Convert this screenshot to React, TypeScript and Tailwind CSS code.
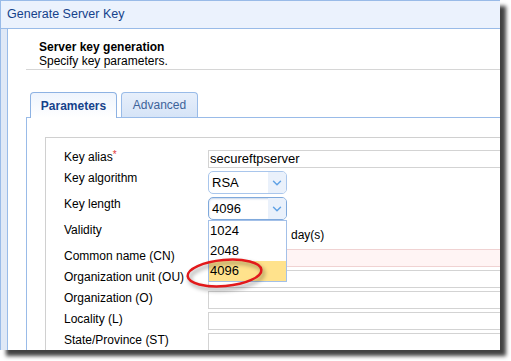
import { ChevronDown } from 'lucide-react';

interface Row {
  label: string;
  value?: string;
  kind: 'text' | 'select' | 'number';
  required?: boolean;
  invalid?: boolean;
}

const rows: Row[] = [
  { label: 'Key alias', value: 'secureftpserver', kind: 'text', required: true },
  { label: 'Key algorithm', value: 'RSA', kind: 'select' },
  { label: 'Key length', value: '4096', kind: 'select' },
  { label: 'Validity', kind: 'number' },
  { label: 'Common name (CN)', kind: 'text', invalid: true },
  { label: 'Organization unit (OU)', kind: 'text' },
  { label: 'Organization (O)', kind: 'text' },
  { label: 'Locality (L)', kind: 'text' },
  { label: 'State/Province (ST)', kind: 'text' },
];

function Select({ value, focused }: { value: string; focused?: boolean }) {
  return (
    <div
      className={`relative w-[79px] h-[23px] rounded-[5px] border bg-white flex items-center overflow-hidden ${
        focused ? 'border-[#7fa9dc] shadow-[inset_0_1px_2px_rgba(90,130,190,0.35)]' : 'border-[#a9c6ec]'
      }`}
    >
      <span className="flex-1 pl-[3px] text-[13px] text-black">{value}</span>
      <span className="w-[18px] h-full bg-[#eaf1fb] flex items-center justify-center">
        <ChevronDown size={14} strokeWidth={2.5} className="text-[#62a3e6]" />
      </span>
    </div>
  );
}

function LengthList() {
  const items = ['1024', '2048', '4096'];
  return (
    <div className="absolute left-0 top-[23px] z-10 w-[79px] border border-[#a3c0e8] bg-white">
      {items.map((item) => (
        <div
          key={item}
          className={`h-[20px] pl-[1px] flex items-center text-[13px] text-black ${
            item === '4096' ? 'bg-[#ffe28c]' : ''
          }`}
        >
          {item}
        </div>
      ))}
    </div>
  );
}

export default function App() {
  return (
    <div className="relative w-[511px] h-[361px] bg-white overflow-hidden font-['Liberation_Sans',Arial,sans-serif]">
      <div className="w-[500px] h-[350px] bg-white shadow-[6px_6px_4px_rgba(0,0,0,0.75)] overflow-hidden flex flex-col">
        {/* title bar */}
        <div className="h-[29px] shrink-0 bg-[#ebf2fd] border-t border-b border-l border-[#99bbe8] pl-[6px] flex items-center text-[12.5px] text-[#15428b]">
          Generate Server Key
        </div>

        <div className="flex flex-1 min-h-0">
          <div className="w-[8px] shrink-0 bg-[#dfe8f6] border-l border-r border-[#99bbe8]" />

          <div className="flex-1 min-w-0 pl-[18px] flex flex-col">
            {/* description */}
            <div className="shrink-0 border-b border-[#d6d6d6] pl-[13px] pt-[11px] pb-[1px] text-[12px] leading-[14px] text-black">
              <div className="font-bold">Server key generation</div>
              <div>Specify key parameters.</div>
            </div>

            {/* tabs */}
            <div className="shrink-0 pt-[22px]">
              <div className="flex items-end gap-[4px] pl-[4px] border-b border-[#99bbe8] h-[26px]">
                <div className="w-[87px] h-[26px] -mb-px rounded-t-[4px] border border-b-0 border-[#8db2e3] bg-gradient-to-b from-[#eef4fd] to-white flex items-center justify-center text-[12px] font-bold text-[#15428b]">
                  Parameters
                </div>
                <div className="w-[77px] h-[25px] rounded-t-[4px] border border-b-0 border-[#99bbe8] bg-gradient-to-b from-[#e7effb] to-[#d6e4f7] flex items-center justify-center text-[12px] text-[#3d6399]">
                  Advanced
                </div>
              </div>
            </div>

            {/* tab panel */}
            <div className="flex-1 min-h-0 border-l border-[#99bbe8] pt-[19px] pl-[18px]">
              <div className="mr-[-40px] h-full border-t border-l border-[#d0d0d0] pt-[12px] pl-[18px]">
                {rows.map((row) => {
                  const tall = row.kind !== 'text';
                  return (
                    <div key={row.label} className={`flex items-start mb-[3px] ${tall ? 'h-[23px]' : 'h-[18px]'}`}>
                      <div className="w-[144px] shrink-0 text-[12px] leading-[14px] text-black">
                        {row.label}
                        {row.required && <span className="relative -top-[3px] text-[10px] text-[#e23a3a]">*</span>}
                      </div>
                      {row.kind === 'text' && (
                        <div
                          className={`w-[320px] h-[18px] border pl-[1px] flex items-center text-[13px] text-black ${
                            row.invalid ? 'bg-[#fff4f4] border-[#f0d2d2]' : 'bg-white border-[#d3d3d3]'
                          }`}
                        >
                          {row.value}
                        </div>
                      )}
                      {row.kind === 'select' && (
                        <div className="relative">
                          <Select value={row.value ?? ''} focused={row.label === 'Key length'} />
                          {row.label === 'Key length' && <LengthList />}
                        </div>
                      )}
                      {row.kind === 'number' && (
                        <div className="flex items-center h-[23px]">
                          <div className="w-[79px] h-[23px] border border-[#d3d3d3] bg-white" />
                          <span className="ml-[4px] text-[12px] text-black">day(s)</span>
                        </div>
                      )}
                    </div>
                  );
                })}
              </div>
            </div>
          </div>
        </div>
      </div>

      {/* annotation */}
      <svg
        className="absolute left-[182px] top-[253px] z-20 pointer-events-none drop-shadow-[2px_3px_2px_rgba(0,0,0,0.4)]"
        width="90"
        height="42"
        viewBox="0 0 90 42"
      >
        <ellipse
          cx="42.5"
          cy="20"
          rx="37"
          ry="13"
          transform="rotate(-5 42.5 20)"
          fill="none"
          stroke="#e2191b"
          strokeWidth="2.5"
        />
      </svg>
    </div>
  );
}
